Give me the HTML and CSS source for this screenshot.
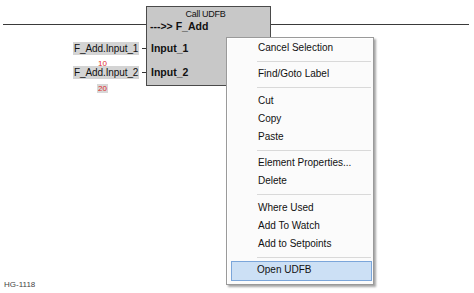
FILE: index.html
```html
<!DOCTYPE html>
<html lang="en">
<head>
  <meta charset="UTF-8">
  <title>Call UDFB - Context Menu</title>
  <link rel="stylesheet" href="styles.css">
</head>
<body>
  <div class="ladder">
    <div class="rung rung-left"></div>
    <div class="rung rung-right"></div>

    <div class="tag tag-1">F_Add.Input_1</div>
    <div class="wire wire-1"></div>
    <div class="value value-1">10</div>
    <div class="tag tag-2">F_Add.Input_2</div>
    <div class="wire wire-2"></div>
    <div class="value value-2">20</div>

    <div class="fb">
      <div class="fb-type">Call UDFB</div>
      <div class="fb-name">---&gt;&gt; F_Add</div>
      <div class="fb-pin pin-1">Input_1</div>
      <div class="fb-pin pin-2">Input_2</div>
    </div>

    <ul class="menu">
      <li>Cancel Selection</li>
      <li class="sep"></li>
      <li>Find/Goto Label</li>
      <li class="sep"></li>
      <li>Cut</li>
      <li>Copy</li>
      <li>Paste</li>
      <li class="sep"></li>
      <li>Element Properties...</li>
      <li>Delete</li>
      <li class="sep"></li>
      <li>Where Used</li>
      <li>Add To Watch</li>
      <li>Add to Setpoints</li>
      <li class="sep"></li>
      <li class="active">Open UDFB</li>
    </ul>

    <div class="caption">HG-1118</div>
  </div>
</body>
</html>
```

FILE: styles.css
```css
body {
  margin: 0;
  padding: 0;
  background: #ffffff;
  font-family: 'Liberation Sans', Arial, sans-serif;
  color: #111;
}

.ladder {
  position: relative;
  width: 474px;
  height: 293px;
  overflow: hidden;
}

/* rung wire */
.rung {
  position: absolute;
  top: 24px;
  height: 1px;
  background-color: #3a3a3a;
}

.rung-left {
  left: 3px;
  width: 143px;
}

.rung-right {
  left: 271px;
  width: 198px;
}

/* input tags */
.tag {
  position: absolute;
  left: 73px;
  padding: 0 1px;
  background-color: #d4d4d4;
  font-size: 10px;
  line-height: 13px;
  letter-spacing: -0.1px;
}

.tag-1 {
  top: 42px;
}

.tag-2 {
  top: 66px;
}

.wire {
  position: absolute;
  left: 142px;
  width: 4px;
  height: 1px;
  background-color: #333;
}

.wire-1 {
  top: 48px;
}

.wire-2 {
  top: 72px;
}

.value {
  position: absolute;
  left: 98px;
  color: #e02a2a;
  font-size: 8px;
  line-height: 9px;
}

.value-1 {
  top: 59px;
}

.value-2 {
  top: 84px;
  left: 97px;
  padding: 0 1px;
  background-color: #d8d8d8;
}

/* function block */
.fb {
  position: absolute;
  left: 146px;
  top: 6px;
  width: 125px;
  height: 80px;
  box-sizing: border-box;
  border: 1px solid #4a4a4a;
  background-color: #c8c8c8;
  padding: 1px 0 0 3px;
}

.fb-type {
  font-size: 9px;
  line-height: 12px;
  letter-spacing: -0.3px;
  text-align: center;
  padding-right: 9px;
}

.fb-name {
  font-size: 10.5px;
  font-weight: bold;
  line-height: 12px;
}

.fb-pin {
  font-size: 10.5px;
  font-weight: bold;
  line-height: 14px;
  padding-left: 1px;
}

.pin-1 {
  margin-top: 9px;
}

.pin-2 {
  margin-top: 10px;
}

/* context menu */
.menu {
  position: absolute;
  left: 226px;
  top: 37px;
  width: 148px;
  box-sizing: border-box;
  margin: 0;
  padding: 1px 1px 3px 4px;
  list-style: none;
  background-color: #fbfbfb;
  border: 1px solid #9a9a9a;
  box-shadow: inset 1px 1px 0 #ffffff, 2px 2px 2px rgba(0, 0, 0, 0.35);
  font-size: 10px;
}

.menu li {
  height: 18px;
  line-height: 18px;
  padding-left: 26px;
  border: 1px solid transparent;
  border-width: 0 1px;
  white-space: nowrap;
}

.menu li.sep {
  height: 1px;
  padding: 0;
  border: none;
  margin: 4px 1px 3.4px 26px;
  background-color: #d9d9d9;
}

.menu li.active {
  height: 18px;
  background-color: #cce0f5;
  border: 1px solid #7ba6da;
  line-height: 16px;
  padding-left: 25px;
}

.caption {
  position: absolute;
  left: 4px;
  top: 280px;
  font-size: 8px;
  color: #444;
}
```
